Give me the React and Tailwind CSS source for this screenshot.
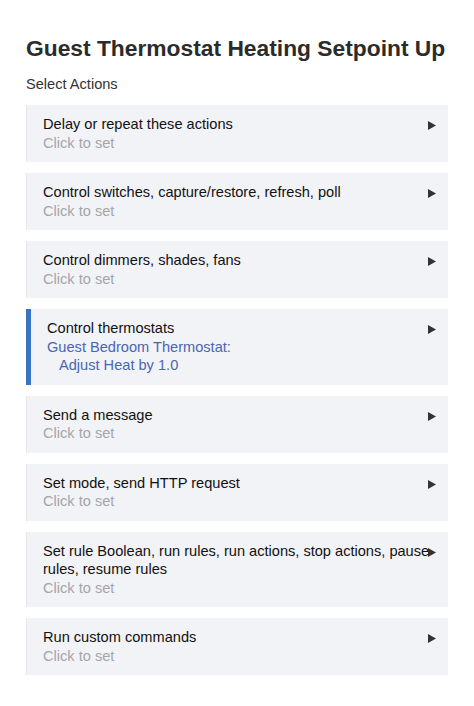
import React from "react";

const items = [
  { title: "Delay or repeat these actions" },
  { title: "Control switches, capture/restore, refresh, poll" },
  { title: "Control dimmers, shades, fans" },
  { title: "Control thermostats", active: true },
  { title: "Send a message" },
  { title: "Set mode, send HTTP request" },
  { title: "Set rule Boolean, run rules, run actions, stop actions, pause rules, resume rules" },
  { title: "Run custom commands" },
];

function Arrow() {
  return (
    <svg className="absolute right-[12px] top-[16px]" width="8" height="9" viewBox="0 0 8 9">
      <path d="M0 0 L8 4.5 L0 9 Z" fill="#333" />
    </svg>
  );
}

export default function App() {
  return (
    <div
      className="bg-white w-[474px] h-[706px] pl-[26px] pr-[26px] pt-[32px] text-[#222]"
      style={{ fontFamily: '"Liberation Sans", Arial, sans-serif' }}
    >
      <h1 className="text-[22.8px] font-bold leading-[32px] text-[#2b2b2b]">
        Guest Thermostat Heating Setpoint Up
      </h1>
      <div className="text-[14.6px] leading-[18px] mt-[11px] text-[#333]">Select Actions</div>
      <div className="flex flex-col gap-[11px] mt-[12px]">
        {items.map((it, i) =>
          it.active ? (
            <div
              key={i}
              className="relative bg-[#f2f3f7] border-l-[5px] border-[#3b73c4] pl-[16px] pr-[40px] pt-[10px] pb-[10px] text-[14.6px] leading-[18.5px]"
            >
              <div className="text-[#111]">{it.title}</div>
              <div className="text-[#4a66b0]">Guest Bedroom Thermostat:</div>
              <div className="text-[#4a66b0] pl-[12px]">Adjust Heat by 1.0</div>
              <Arrow />
            </div>
          ) : (
            <div
              key={i}
              className="relative bg-[#f2f3f7] border-l border-[#e6e7eb] pl-[16px] pr-[15px] pt-[10px] pb-[10px] text-[14.6px] leading-[18.5px]"
            >
              <div className="text-[#111]">{it.title}</div>
              <div className="text-[#a5a5a8]">Click to set</div>
              <Arrow />
            </div>
          )
        )}
      </div>
    </div>
  );
}
